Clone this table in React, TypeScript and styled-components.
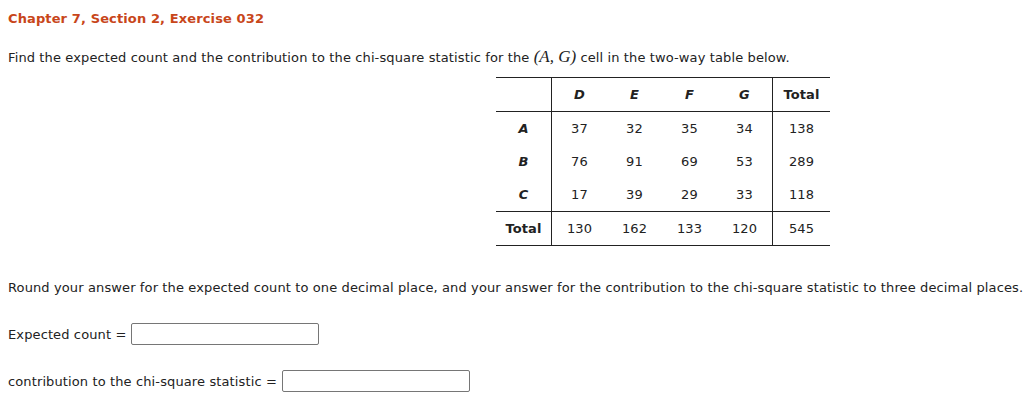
import styled, { createGlobalStyle } from 'styled-components';

const GlobalStyle = createGlobalStyle`
  body {
    margin: 0;
    background: #fff;
    font-family: 'DejaVu Sans', Verdana, sans-serif;
    font-size: 13px;
    letter-spacing: 0.12px;
    color: #222;
  }
`;

const cols = ['D', 'E', 'F', 'G'];
const rows = [
  { label: 'A', values: [37, 32, 35, 34], total: 138 },
  { label: 'B', values: [76, 91, 69, 53], total: 289 },
  { label: 'C', values: [17, 39, 29, 33], total: 118 },
];
const colTotals = [130, 162, 133, 120];
const grandTotal = 545;

const App = () => {
  return (
    <Page>
      <GlobalStyle />
      <Title>Chapter 7, Section 2, Exercise 032</Title>
      <Prompt>
        Find the expected count and the contribution to the chi-square statistic for the{' '}
        <MathText>(A, G)</MathText> cell in the two-way table below.
      </Prompt>
      <TableWrap>
        <DataTable>
          <thead>
            <tr>
              <Cell $divider />
              {cols.map((c) => (
                <HeadCell key={c} $italic>
                  {c}
                </HeadCell>
              ))}
              <HeadCell $left>Total</HeadCell>
            </tr>
          </thead>
          <tbody>
            {rows.map((r) => (
              <tr key={r.label}>
                <RowHead $divider $italic>
                  {r.label}
                </RowHead>
                {r.values.map((v, j) => (
                  <Cell key={j}>{v}</Cell>
                ))}
                <Cell $left>{r.total}</Cell>
              </tr>
            ))}
            <TotalRow>
              <RowHead $divider>Total</RowHead>
              {colTotals.map((v, j) => (
                <Cell key={j}>{v}</Cell>
              ))}
              <Cell $left>{grandTotal}</Cell>
            </TotalRow>
          </tbody>
        </DataTable>
      </TableWrap>
      <Instruction>
        Round your answer for the expected count to one decimal place, and your answer for the contribution
        to the chi-square statistic to three decimal places.
      </Instruction>
      <AnswerRow $gap={27}>
        <span>Expected count =</span>
        <AnswerInput type="text" />
      </AnswerRow>
      <AnswerRow $gap={25}>
        <span>contribution to the chi-square statistic =</span>
        <AnswerInput type="text" />
      </AnswerRow>
    </Page>
  );
};

export default App;

const Page = styled.div`
  padding: 11px 8px 0 8px;
  width: 1030px;
  box-sizing: border-box;
`;

const Title = styled.div`
  font-weight: 700;
  color: #c8461a;
  line-height: 16px;
`;

const Prompt = styled.p`
  margin: 20px 0 0 0;
  line-height: 20px;
  white-space: nowrap;
`;

const MathText = styled.span`
  font-family: 'Liberation Serif', 'DejaVu Serif', serif;
  font-style: italic;
  font-size: 17px;
  letter-spacing: 0;
`;

const TableWrap = styled.div`
  display: flex;
  padding-left: 488px;
  margin-top: 9px;
`;

const DataTable = styled.table`
  border-collapse: collapse;
  border-top: 1px solid #222;
  border-bottom: 1px solid #222;
  thead tr {
    border-bottom: 1px solid #222;
  }
`;

const Cell = styled.td<{ $divider?: boolean; $left?: boolean; $italic?: boolean }>`
  height: 33px;
  padding: 0;
  width: 55px;
  text-align: center;
  font-style: ${(p) => (p.$italic ? 'italic' : 'normal')};
  border-right: ${(p) => (p.$divider ? '1px solid #222' : 'none')};
  border-left: ${(p) => (p.$left ? '1px solid #222' : 'none')};
  ${(p) => (p.$left ? 'width: 57px;' : '')}
`;

const HeadCell = styled(Cell).attrs({ as: 'th' })`
  font-weight: 700;
`;

const RowHead = styled(Cell)`
  font-weight: 700;
`;

const TotalRow = styled.tr`
  border-top: 1px solid #222;
`;

const Instruction = styled.p`
  margin: 34px 0 0 0;
  line-height: 16px;
  white-space: nowrap;
`;

const AnswerRow = styled.div<{ $gap: number }>`
  display: flex;
  align-items: center;
  gap: 5px;
  margin-top: ${(p) => p.$gap}px;
`;

const AnswerInput = styled.input`
  width: 188px;
  height: 22px;
  box-sizing: border-box;
  border: 1px solid #767676;
  border-radius: 2px;
  padding: 0 4px;
  font-family: inherit;
  font-size: 13px;
`;
